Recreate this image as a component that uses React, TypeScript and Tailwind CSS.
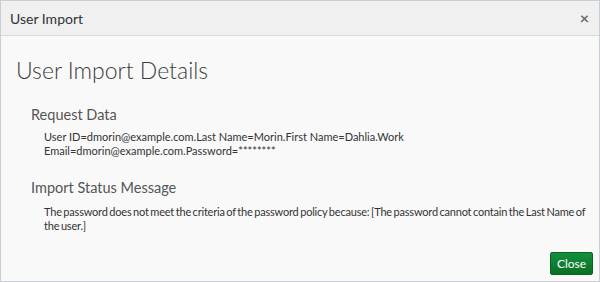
export default function App() {
  return (
    <div className="w-[600px] h-[282px] bg-[#f9f9f9] border border-[#c9ced6] flex flex-col font-['Lato',sans-serif] text-[#333]">
      {/* Header */}
      <div className="h-[35px] shrink-0 bg-[#f0f0f0] border-b border-[#d6dbe1] flex items-center justify-between pl-[9px] pr-[10px]">
        <span className="text-[14px] text-[#333]">User Import</span>
        <button className="text-[#6b6b6b] text-[16px] leading-none font-bold">×</button>
      </div>

      {/* Body */}
      <div className="flex-1 flex flex-col pl-[15px] pr-[6px] pt-[18px]">
        <h1 className="text-[23px] leading-[32px] font-light text-[#3c3c3c]">User Import Details</h1>

        <div className="pl-[15px] mt-[19px]">
          <h2 className="text-[14.5px] leading-[20px] text-[#555]">Request Data</h2>
          <p className="pl-[13px] mt-[5px] text-[11px] leading-[14px] text-[#333]">
            User ID=dmorin@example.com.Last Name=Morin.First Name=Dahlia.Work
            <br />
            Email=dmorin@example.com.Password=********
          </p>

          <h2 className="mt-[20px] text-[14.5px] leading-[20px] text-[#555]">Import Status Message</h2>
          <p className="pl-[13px] mt-[7px] text-[11px] leading-[14px] text-[#333] tracking-[-0.2px] [word-spacing:-1px]">
            The password does not meet the criteria of the password policy because: [The password cannot contain the Last Name of the user.]
          </p>
        </div>

        <div className="mt-auto mb-[6px] flex justify-end">
          <button className="h-[23px] w-[43px] rounded-[2px] bg-gradient-to-b from-[#14903e] to-[#0b6e24] border border-[#0a6322] text-white text-[12px]">
            Close
          </button>
        </div>
      </div>
    </div>
  );
}
